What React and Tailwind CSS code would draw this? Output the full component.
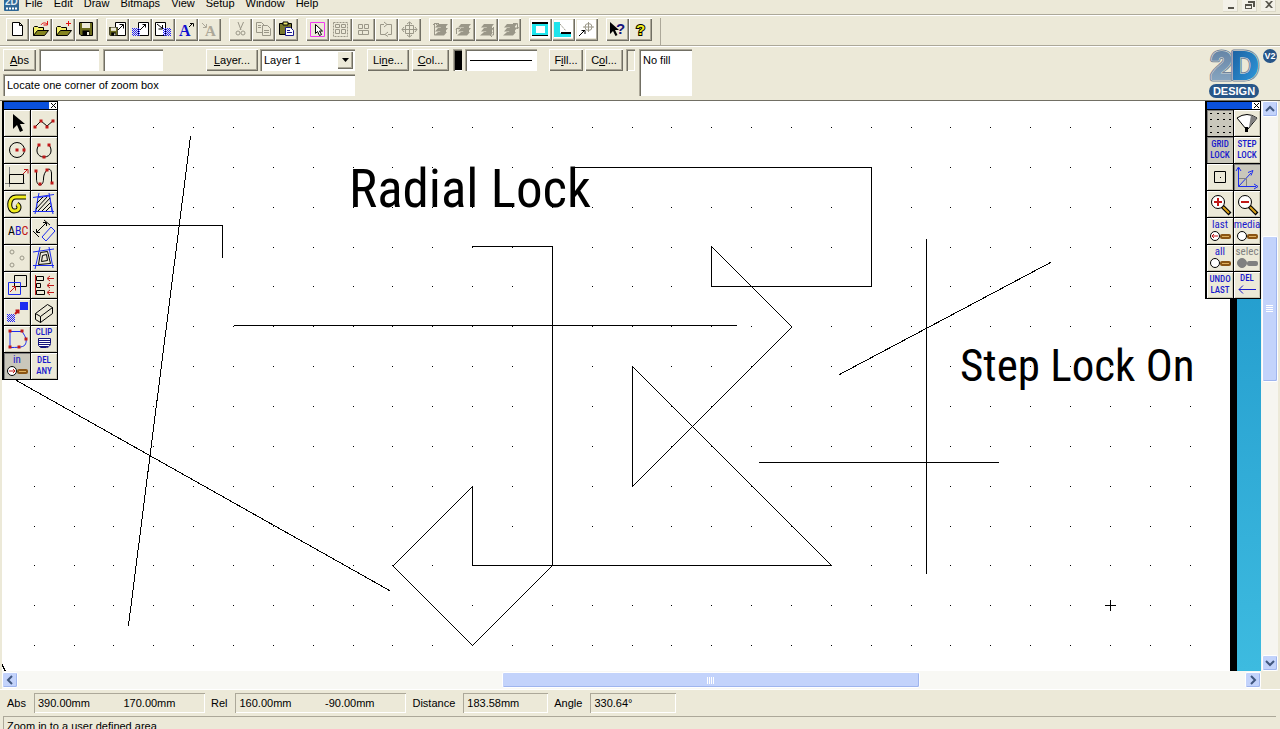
import { useState } from "react";

/* ---------- shared looks ---------- */
const raised =
  "bg-[#ece9d8] shadow-[inset_1px_1px_0_#ffffff,inset_-1px_-1px_0_#716f64,inset_-2px_-2px_0_#aca899]";
const sunken =
  "bg-white shadow-[inset_1px_1px_0_#aca899,inset_2px_2px_0_#716f64,inset_-1px_-1px_0_#ffffff]";
const statusBox =
  "flex h-5 items-center shadow-[inset_1px_1px_0_#aca899,inset_-1px_-1px_0_#ffffff]";

const NARROW = "Roboto Condensed, Liberation Sans, sans-serif";
const BLUE = "#1a1acc";
const RED = "#c01818";

/* ---------- toolbar icons, 23x23 ---------- */
const Floppy = ({ x = 0, y = 0, s = 14 }) => (
  <svg x={x} y={y} width={s} height={s} viewBox="0 0 14 14">
    <path d="M.5.5h13v13H2L.5 12z" fill="#6b6b1c" stroke="#000" />
    <path d="M3 1h8v5H3z" fill="#ece9d8" />
    <path d="M3.500 8.500h7v5h-7z" fill="#000" />
    <path d="M8 10h2v3H8z" fill="#ece9d8" />
  </svg>
);

const Folder = () => (
  <>
    <path d="M4.500 17.500v-8l1-1h3l1 1h5v3" fill="#f4f06a" stroke="#000" />
    <path d="M4.500 17.500l4-5h11l-4 5z" fill="#85851f" stroke="#000" />
  </>
);

const Hatch = ({ x, y }) => (
  <svg x={x} y={y} width="8" height="8" shapeRendering="crispEdges">
    {Array.from({ length: 32 }, (_, i) => (
      <rect key={i} x={(i % 4) * 2 + (Math.floor(i / 4) % 2)} y={Math.floor(i / 4)}
            width="1" height="1" fill="#2222ff" />
    ))}
  </svg>
);

const Layers = () => (
  <g fill="#9a9788">
    <path d="M9 6h10l-3 3.500H6z" />
    <path d="M9 10h10l-3 3.500H6z" />
    <path d="M9 14h9l-3 3.500H5z" />
    <path d="M12 8h5v7h-6z" />
  </g>
);

const ICONS = {
  New: <path d="M6.500 4.500h7l3 3v10h-10zM13.500 4.500v3h3" fill="#fff" stroke="#000" />,
  Open: (
    <>
      <Folder />
      <path d="M12 7c1-2 4-3 6-1M18.500 3v4h-4" fill="none" stroke="#e01010" />
    </>
  ),
  "Open and add": (
    <>
      <Folder />
      <path d="M16.500 3v5M14 5.500h5" stroke="#e01010" />
    </>
  ),
  Save: <Floppy x={4} y={4} />,
  "Save part": (
    <>
      <path d="M9.500 4.500h10v13h-10z" fill="#fff" stroke="#000" />
      <Floppy x={3} y={9} s={9} />
      <path d="M12 12l5-5M13.500 6.500h4v4" fill="none" stroke="#000" />
    </>
  ),
  "Export bitmap": (
    <>
      <path d="M9.500 4.500h10v13h-10z" fill="#fff" stroke="#000" />
      <Hatch x={3} y={10} />
      <path d="M11 12l6-6M13.500 6.500h3v3" fill="none" stroke="#000" />
    </>
  ),
  "Import bitmap": (
    <>
      <path d="M3.500 4.500h10v13h-10z" fill="#fff" stroke="#000" />
      <Hatch x={11} y={10} />
      <path d="M5 6l5 4M10.500 7v4h-4" fill="none" stroke="#000" />
    </>
  ),
  "Export text": (
    <>
      <text x="4" y="18" fontSize="16" fontWeight="bold" fill="#1010d0"
            fontFamily="Liberation Serif, serif">A</text>
      <path d="M14 9l4-4M15 5.500h3.500v3" fill="none" stroke="#000" />
    </>
  ),
  "Import text": (
    <>
      <text x="7" y="18" fontSize="15" fontWeight="bold" fill="#aca899"
            fontFamily="Liberation Serif, serif">A</text>
      <path d="M4 5l4 4M8.500 6v3.500H5" fill="none" stroke="#aca899" />
    </>
  ),
  Cut: (
    <g fill="none" stroke="#9a9788">
      <path d="M9 4l3 8M14.500 4L11 12" />
      <circle cx="9" cy="15" r="2" />
      <circle cx="14" cy="15" r="2" />
    </g>
  ),
  Copy: (
    <g fill="#ece9d8" stroke="#9a9788">
      <path d="M4.500 4.500h5l3 3v7h-8z" />
      <path d="M10.500 7.500h5l3 3v7h-8zM6 7.500h3M6 9.500h3M12 12.500h5M12 14.500h5" />
    </g>
  ),
  Paste: (
    <>
      <path d="M4.500 5.500h12v11h-12z" fill="#77772c" stroke="#000" />
      <path d="M8 4h5v3H8z" fill="#e9e46a" stroke="#000" />
      <path d="M10.500 9.500h5l3 3v5h-8z" fill="#fff" stroke="#1a1a8c" />
      <path d="M12 12.500h3M12 14.500h5" stroke="#1a1a8c" />
    </>
  ),
  Select: (
    <>
      <path d="M4.500 4.500h14v14h-14z" fill="none" stroke="#f03cf0" />
      <path d="M9.500 6.500v9l2-2 2 4 2-1-2-3.500h3z" fill="#fff" stroke="#000" />
    </>
  ),
  "Select all": (
    <g fill="none" stroke="#9a9788">
      <path d="M4.500 4.500h14v14h-14z" strokeDasharray="2 1" />
      <path d="M6.500 6.500h4v3h-4zM12.500 6.500h4v3h-4zM6.500 11.500h4v4h-4zM12.500 11.500h4v4h-4z" />
    </g>
  ),
  Group: (
    <path d="M6.500 6.500h4v4h-4zM12.500 6.500h4v4h-4zM6.500 12.500h10v4h-10zM10.500 12.500v4"
          fill="none" stroke="#9a9788" />
  ),
  Ungroup: (
    <path d="M9 6.500H5.500v10H10M12 6.500h4.500v10H13M9 4l3 2.500-3 2.500M13 14l-3 2.500 3 2"
          fill="none" stroke="#9a9788" />
  ),
  Move: (
    <path d="M11.500 4v15M4 11.500h15M9 6l2.500-2L14 6M9 17l2.500 2 2.500-2M6 9l-2 2.500L6 14M17 9l2 2.500-2 2.500M7.500 7.500h8v8h-8z"
          fill="none" stroke="#9a9788" />
  ),
  "Bring to front": (
    <>
      <Layers />
      <path d="M5.500 17V5.500H10M4 7l2-2 2 2" fill="none" stroke="#9a9788" />
    </>
  ),
  "Bring forward": (
    <>
      <Layers />
      <path d="M4.500 16v-5.500H8M4 12l1-2 2 1" fill="none" stroke="#9a9788" />
    </>
  ),
  "Send backward": (
    <>
      <Layers />
      <path d="M18.500 9v8H15M17 15l-2 2 2 2" fill="none" stroke="#9a9788" />
    </>
  ),
  "Send to back": (
    <>
      <Layers />
      <path d="M15 5.500h4.500V11M17.500 9l2 2 1-2" fill="none" stroke="#9a9788" />
    </>
  ),
  "Zoom page": (
    <>
      <path d="M2 2h19v18H2z" fill="#fff" />
      <path d="M3 5h16v13H3z" fill="#1fe4ec" />
      <path d="M7 8h9v7H7z" fill="#fff" />
      <path d="M3 4h16v2H3zM3 17h16v1H3z" />
    </>
  ),
  "Show axes": (
    <>
      <path d="M2 2h19v18H2z" fill="#fff" />
      <path d="M2 4h6v11h11v4H2z" fill="#1fe4ec" />
      <path d="M9 14h10v2H9z" />
      <path d="M8 6l6 7" stroke="#9a9788" strokeDasharray="2 1" />
    </>
  ),
  "Snap point": (
    <>
      <path d="M2 2h19v18H2z" fill="#fff" />
      <path d="M4 18l6-6M6.500 12.500H10V16" fill="none" stroke="#000" />
      <circle cx="13.500" cy="9" r="3.500" fill="none" stroke="#9a9788" />
      <path d="M8 9h11M13.500 4v10" stroke="#9a9788" />
    </>
  ),
  "Context help": (
    <>
      <path d="M4 4v12l3-3 2.500 5 2-1L9 12h4z" />
      <text x="10" y="16" fontSize="15" fontWeight="bold" fill="#14147c"
            fontFamily="Liberation Sans, sans-serif">?</text>
    </>
  ),
  Help: (
    <text x="7" y="17" fontSize="15" fontWeight="bold" fill="#f2ee1c" stroke="#000"
          strokeWidth="2" paintOrder="stroke" fontFamily="Liberation Sans, sans-serif">?</text>
  ),
};

const TOOLBAR = [
  ["New", "Open", "Open and add", "Save"],
  ["Save part", "Export bitmap", "Import bitmap", "Export text", "Import text"],
  ["Cut", "Copy", "Paste"],
  ["Select", "Select all", "Group", "Ungroup", "Move"],
  ["Bring to front", "Bring forward", "Send backward", "Send to back"],
  ["Zoom page", "Show axes", "Snap point"],
  ["Context help", "Help"],
];

/* ---------- palette icons, 26x26 ---------- */
const Dots = ({ at, r = 1.5 }) =>
  at.map(([x, y]) => (
    <rect key={x + "-" + y} x={x - r} y={y - r} width={r * 2} height={r * 2} fill={RED} />
  ));

const Glass = ({ cx = 8, arrow, off }) => (
  <>
    <circle cx={cx} cy="18" r="4.500" fill={off ? "#808080" : "#fff"} stroke={off ? "#808080" : "#000"} />
    <rect x={cx + 5} y="16" width="11" height="5" rx="2" fill={off ? "#808080" : "#8a5414"} />
    {!off && <path d={`M${cx + 7} 18.500h7`} stroke="#e0b060" />}
    {arrow === "in" && <path d="M5 18h6M9 16l2 2-2 2" fill="none" stroke={RED} />}
    {arrow === "out" && <path d="M5 18h6M7 16l-2 2 2 2" fill="none" stroke={RED} />}
  </>
);

const Zoomer = ({ plus }) => (
  <>
    <path d="M15 15l8 8" stroke="#000" strokeWidth="4" />
    <path d="M16 16l6 6" stroke="#d8a018" strokeWidth="2" />
    <circle cx="11" cy="11" r="6.500" fill="#fff" stroke="#000" />
    <path d={plus ? "M7 11h8M11 7v8" : "M7 11h8"} stroke={RED} strokeWidth="2" />
  </>
);

const LEFT_TOOLS = [
  { name: "Select", art: <path d="M9 4v15l4-4 3 7 3-1.500-3-6.500h5z" /> },
  { name: "Line", art: <><path d="M4 17l6-6 6 5 7-6" fill="none" stroke="#000" /><Dots at={[[4, 17], [10, 11], [16, 17], [22, 11]]} /></> },
  { name: "Circle", art: <><circle cx="13" cy="13" r="7.500" fill="none" stroke="#000" /><Dots at={[[13, 13], [20, 13]]} /></> },
  { name: "Arc", art: <><path d="M8 8c-4 5-2 12 5 12s9-7 5-12" fill="none" stroke="#000" /><Dots at={[[8, 8], [18, 8], [13, 20]]} /></> },
  { name: "Rectangle", art: <><path d="M1 19.500h20M5.500 3v20" stroke="#808080" /><path d="M5.500 10.500h14v9h-14z" fill="none" stroke="#000" /><path d="M19 10l4-4M20 5.500h4v4" fill="none" stroke={RED} /></> },
  { name: "Curve", art: <><path d="M5.500 7v8c0 8 7 8 7 0S19.500 1 20.500 9v10" fill="none" stroke="#000" /><Dots at={[[5, 7], [9, 20], [16, 6], [21, 19]]} /></> },
  { name: "Path", art: <><path d="M22 6H12c-8 0-8 14-2 14s6-5 3-7" fill="none" stroke="#000" strokeWidth="5" /><path d="M22 6H12c-8 0-8 14-2 14s6-5 3-7" fill="none" stroke="#f0ec20" strokeWidth="3" /></> },
  { name: "Hatch", art: <><path d="M2 6.500l21-3M2 20.500h21M8 2L4 23M18 2l4 21" stroke="#1c2cf0" /><path d="M7 6.500L18.500 5 21 20.500H5z" fill="#ece9d8" stroke="#1c2cf0" /><path d="M6 12l6-6M5 18L16 6M7 20L19 7M11 20l8-8M15 20l5-5" stroke="#000" /></> },
  { name: "Text", art: <text x="4" y="17" fontSize="12" fontFamily={NARROW}><tspan>A</tspan><tspan fill={BLUE}>B</tspan><tspan fill={RED}>C</tspan></text> },
  { name: "Dimension", art: <><path d="M11 19l9-10 4 4-9 10z" fill="none" stroke="#1c2cf0" /><path d="M6 14l9-9M5.500 11v3.500H9M12 4.500h3.500V8M2 13l6 6M13 2l6 5" fill="none" stroke="#000" /></> },
  { name: "Points", art: <g fill="none" stroke="#9a9788"><circle cx="8" cy="7" r="2" /><circle cx="18" cy="13" r="2" /><circle cx="8" cy="20" r="2" /></g> },
  { name: "Contour", art: <><path d="M2 7l21-3M2 20.500h21M9 2L4 24M18 2l4 21" stroke="#1c2cf0" /><path d="M9.500 7.500l7-1 3 12-12 1z" fill="#ece9d8" stroke="#000" /><path d="M11.500 10.500l4-1 1 6-6 1z" fill="none" stroke="#000" /></> },
  { name: "Transform", art: <><path d="M10.500 3.500h12v11h-12z" fill="none" stroke="#000" /><path d="M4.500 10.500h12v12h-12z" fill="none" stroke="#1c2cf0" /><path d="M6 20l5-5M8 14.500h3.500v4" fill="none" stroke={RED} /></> },
  { name: "Align", art: <><path d="M4.500 3v20" stroke={RED} /><path d="M5.500 4.500h7v4h-7zM5.500 11.500h4v4h-4zM5.500 18.500h8v4h-8z" fill="none" stroke="#000" /><path d="M17 6.500h6M17 13.500h6M17 20.500h6M19 4l-3 2.500L19 9M19 11l-3 2.500 3 2.500M19 18l-3 2.500 3 2.500" fill="none" stroke={RED} /></> },
  { name: "Scale", art: <><rect x="16" y="3" width="8" height="8" fill="#1c2cf0" /><Hatch x={3} y={15} /><path d="M11 15l4-4M11.500 11.500h3v3" fill="none" stroke={RED} strokeWidth="2" /></> },
  { name: "Extrude", art: <path d="M4.500 14.500l12-9 5 3v6l-12 9-5-3zM4.500 14.500l5 3 12-9M9.500 17.500v6" fill="none" stroke="#000" /> },
  { name: "Edit nodes", art: <><path d="M6 5.500h12c2 3 5 7 4 11-1 4-3 5-16 5z" fill="none" stroke="#1c2cf0" /><Dots at={[[6, 5], [18, 5], [22, 13], [15, 21], [6, 21]]} /></> },
  { name: "Clip", label: ["CLIP"], art: <><path d="M7.500 12.500h12v5c0 2-2 4-4 4h-6l-2-2z" fill="#fff" stroke="#14147c" /><path d="M8 14.500h11M8 16.500h11M8 18.500h11M9 20.500h8" stroke="#14147c" /></> },
  { name: "Zoom in box", label: ["in"], art: <Glass arrow="in" />, on: true },
  { name: "Delete any", label: ["DEL", "ANY"] },
];

const RIGHT_TOOLS = [
  {
    name: "Show grid", on: true,
    art: [3, 10, 16, 22].map((x) => [3, 9, 16, 22].map((y) => (
      <rect key={x + "-" + y} x={x} y={y} width="2" height="1" />
    ))),
  },
  { name: "Angle lock", art: <><path d="M3 8q10-7 20 0l-9 11h-2z" fill="#fff" stroke="#000" /><path d="M17 5l6 3-8 9z" fill="#808080" /><path d="M11 17h3v5h-3z" /></> },
  { name: "Grid lock", label: ["GRID", "LOCK"], on: true },
  { name: "Step lock", label: ["STEP", "LOCK"] },
  { name: "Attach", art: <><path d="M7.500 7.500h11v11h-11z" fill="none" stroke="#000" /><rect x="13" y="13" width="1" height="1" /></> },
  { name: "Radial lock", on: true, art: <><path d="M4.500 22.500V4M4.500 22.500H22M4.500 22.500L17 9M2 7l2.500-4L7 7M20 20l4 2.500-4 2.500M14 8.500l5-2-2 5" fill="none" stroke="#1c2cf0" /><path d="M5 14.500h7.500V22" fill="none" stroke="#808080" /></> },
  { name: "Zoom in", art: <Zoomer plus /> },
  { name: "Zoom out", art: <Zoomer /> },
  { name: "Zoom last", label: ["last"], art: <Glass arrow="out" /> },
  { name: "Zoom media", label: ["media"], art: <Glass /> },
  { name: "Zoom all", label: ["all"], art: <Glass /> },
  { name: "Zoom selected", label: ["selec"], art: <Glass off />, off: true },
  { name: "Undo last", label: ["UNDO", "LAST"] },
  { name: "Delete last", label: ["DEL"], art: <path d="M5 17.500h17M9 13.500l-4 4 4 4" fill="none" stroke={BLUE} /> },
];

function Palette({ tools, label }) {
  return (
    <section aria-label={label} className="w-14 bg-black pt-px pr-px pb-px pl-0.5">
      <div className="mb-px flex h-[7px] bg-[#0a50dc]">
        <button aria-label="Close palette" className="ml-auto flex w-2 items-center justify-center bg-white">
          <svg width="7" height="7" viewBox="0 0 7 7"><path d="M1 1l5 5M6 1L1 6" stroke="#000" /></svg>
        </button>
      </div>
      <div className="grid grid-cols-2 gap-px">
        {tools.map((t) => (
          <button key={t.name} aria-label={t.name} aria-pressed={!!t.on}
                  className={`relative h-[26px] ${
                    t.on
                      ? "bg-[#c9c7bb] shadow-[inset_1px_1px_0_#808080]"
                      : "bg-[#ece9d8] shadow-[inset_1px_1px_0_#ffffff,inset_-1px_-1px_0_#c8c5b2]"
                  }`}>
            {t.art && <svg width="26" height="26" viewBox="0 0 26 26" className="absolute inset-0">{t.art}</svg>}
            {t.label && (
              <span className={`relative flex h-full flex-col items-center font-['Roboto_Condensed','Liberation_Sans',sans-serif] ${
                t.label.length > 1 ? "justify-center" : "justify-start pt-px"
              } ${t.off ? "text-[#808080]" : "text-[#1a1acc]"}`}>
                {t.label.map((l) => (
                  <span key={l} className={l === l.toUpperCase() ? "text-[9px] leading-[11px] font-medium" : "text-[11px] leading-[11px]"}>
                    {l}
                  </span>
                ))}
              </span>
            )}
          </button>
        ))}
      </div>
    </section>
  );
}

/* ---------- the drawing ---------- */
const GRID = [];
for (let r = 0; r < 14; r++)
  for (let c = 0; c < 31; c++)
    GRID.push([Math.round(33.7 + c * 39.86), Math.round(127 + r * 39.85)]);

function Drawing() {
  return (
    <svg className="absolute inset-0 h-full w-full" role="img" aria-label="Drawing">
      <g transform="translate(-2 -101)">
        <g shapeRendering="crispEdges">
          {GRID.map(([x, y]) => <rect key={x + "-" + y} x={x} y={y} width="1" height="1" />)}
          <g transform="translate(.5 .5)" fill="none" stroke="#000" strokeLinecap="square">
            <path d="M190 136L128 625" />
            <path d="M58 225H222V257" />
            <path d="M16 380L389 590" />
            <path d="M1 663L5 671" />
            <path d="M234 325H736" />
            <path d="M472 246H552V565L472 645L392 565" />
            <path d="M393 565L472 486V565H831L632 366V486L791 327" />
            <path d="M791 326L711 246V286H871V167H573" />
            <path d="M926 239V573M759 462H998M839 374L1050 262" />
            <path d="M1105 605H1115M1110 600V610" />
          </g>
        </g>
        <g fontFamily={NARROW}>
          <text x="349" y="207" fontSize="53">Radial Lock</text>
          <text x="960" y="381" fontSize="45">Step Lock On</text>
        </g>
      </g>
    </svg>
  );
}

/* ---------- scroll bars ---------- */
const scrollPart = "rounded-xs border border-white bg-[#c3d3fb] shadow-[inset_-1px_-1px_0_#9fb5ee]";

const ScrollButton = ({ label, d }) => (
  <button aria-label={label} className={`flex size-4 shrink-0 items-center justify-center ${scrollPart}`}>
    <svg width="10" height="10" viewBox="0 0 10 10"><path d={d} fill="none" stroke="#40577f" strokeWidth="2" /></svg>
  </button>
);

/* ---------- small bits ---------- */
const TextButton = ({ pre = "", hot, post, className }) => (
  <button className={`h-[22px] shrink-0 ${raised} ${className}`}>{pre}<u>{hot}</u>{post}</button>
);

/* outline, pale rim, then the filled figure on top */
const Figure = ({ x, fill, children }) => (
  <>
    <text x={x} y="30" fill="#71839a" stroke="#71839a" strokeWidth="5">{children}</text>
    <text x={x} y="30" fill="#e8e6dc" stroke="#e8e6dc" strokeWidth="3">{children}</text>
    <text x={x} y="30" fill={fill} stroke={fill} strokeWidth="2">{children}</text>
  </>
);

const Logo = () => (
  <svg width="72" height="50" viewBox="0 0 72 50" className="shrink-0" role="img" aria-label="2D Design V2">
    <defs>
      <linearGradient id="d" x1="0" y1="0" x2="1" y2="1">
        <stop offset="0" stopColor="#1b5c9c" /><stop offset="1" stopColor="#2f9ce0" />
      </linearGradient>
      <linearGradient id="two" x1="0" y1="0" x2="0" y2="1">
        <stop offset="0" stopColor="#5f7fa2" /><stop offset="1" stopColor="#8eabc4" />
      </linearGradient>
    </defs>
    <g fontFamily="Liberation Sans, sans-serif" fontWeight="bold">
      <g fontSize="38" strokeLinejoin="round">
        <Figure x="3" fill="url(#two)">2</Figure>
        <Figure x="23" fill="url(#d)">D</Figure>
      </g>
      <rect x="1" y="35" width="50" height="14" rx="7" fill="#285688" />
      <text x="26" y="46" fontSize="11" fill="#fff" textAnchor="middle">DESIGN</text>
      <circle cx="62" cy="7" r="7" fill="#285688" />
      <text x="62" y="10" fontSize="9" fill="#fff" textAnchor="middle">V2</text>
    </g>
  </svg>
);

const Readout = ({ label, values, className }) => (
  <dl className="flex items-center">
    <dt>{label}</dt>
    <dd className={`${statusBox} ${className}`}>
      {values.map((v) => <span key={v} className="flex-1 pl-1">{v}</span>)}
    </dd>
  </dl>
);

const MENUS = ["File", "Edit", "Draw", "Bitmaps", "View", "Setup", "Window", "Help"];
const WINDOW_BUTTONS = [
  { name: "Minimise", d: "M3 7h6v2H3z" },
  { name: "Restore", d: "M4 1h7v6H9V3H4zM1 4h7v5H1zM2 6v2h5V6z" },
  { name: "Close", d: "M2 1h2l2 2 2-2h2L7 4.500 10 8H8L6 6 4 8H2l3-3.500z" },
];

export default function App() {
  const [pos, setPos] = useState({ x: "", y: "" });
  const [layer, setLayer] = useState("Layer 1");
  const change = (e) => setPos({ ...pos, [e.target.name]: e.target.value });

  return (
    <div className="flex h-screen flex-col overflow-hidden bg-[#ece9d8] font-['Liberation_Sans',Arial,sans-serif] text-[11px] leading-[14px] text-black">
      {/* menu bar, its upper part hidden under the window edge */}
      <header className="flex h-3.5 shrink-0 items-end overflow-hidden">
        <svg width="16" height="22" viewBox="0 0 16 22" className="ml-1 shrink-0">
          <rect x="0" y="4" width="15" height="15" rx="1" fill="#2f6796" />
          <text x="1" y="13" fontSize="10" fontWeight="bold" fill="#dfe9f2"
                fontFamily="Liberation Sans, sans-serif">2D</text>
          <path d="M2 16.500h11" stroke="#fff" strokeWidth="2" strokeDasharray="2 1" />
        </svg>
        <nav className="flex h-[22px] items-center gap-[11px] pl-[5px]">
          {MENUS.map((m) => <button key={m}>{m}</button>)}
        </nav>
        <div className="mr-1 mb-0.5 ml-auto flex gap-1">
          {WINDOW_BUTTONS.map((b) => (
            <button key={b.name} aria-label={b.name}
                    className="flex h-4 w-[15px] items-end justify-center bg-[#f3f1e8] pb-0.5 shadow-[inset_-1px_-1px_0_#dcd9c8]">
              <svg width="12" height="10" viewBox="0 0 12 10" fillRule="evenodd" fill="#55534a"><path d={b.d} /></svg>
            </button>
          ))}
        </div>
      </header>

      {/* toolbar */}
      <div className="flex h-[31px] shrink-0 gap-2 border-t border-[#aca899] pt-[3px] pl-1.5 shadow-[inset_0_1px_0_#ffffff]">
        {TOOLBAR.map((group) => (
          <div key={group[0]} className="flex">
            {group.map((name) => (
              <button key={name} aria-label={name} className={`size-[23px] ${raised}`}>
                <svg width="23" height="23" viewBox="0 0 23 23">{ICONS[name]}</svg>
              </button>
            ))}
          </div>
        ))}
        <div className="w-px bg-[#aca899]" />
      </div>

      {/* attributes */}
      <div className="flex h-14 shrink-0 items-start border-t border-b border-t-[#aca899] border-b-[#716f64] pt-[3px] pl-[3px] shadow-[inset_0_1px_0_#ffffff]">
        <div className="w-[352px] shrink-0">
          <div className="flex">
            <TextButton hot="A" post="bs" className="w-[33px]" />
            <input name="x" aria-label="X position" value={pos.x} onChange={change}
                   className={`ml-[3px] h-[22px] w-[60px] px-1 ${sunken}`} />
            <input name="y" aria-label="Y position" value={pos.y} onChange={change}
                   className={`ml-1 h-[22px] w-[60px] px-1 ${sunken}`} />
            <TextButton hot="L" post="ayer..." className="ml-[43px] w-[52px]" />
            <div className="relative ml-0.5 flex-1">
              <select aria-label="Layer" value={layer} onChange={(e) => setLayer(e.target.value)}
                      className={`h-[22px] w-full appearance-none pl-1 ${sunken}`}>
                <option>Layer 1</option>
              </select>
              <span className={`pointer-events-none absolute top-0.5 right-0.5 flex h-[18px] w-4 items-center justify-center ${raised}`}>
                <svg width="7" height="4"><path d="M0 0h7L3.500 4z" /></svg>
              </span>
            </div>
          </div>
          <output className={`mt-[3px] flex h-[22px] items-center pl-1 ${sunken}`}>
            Locate one corner of zoom box
          </output>
        </div>

        <TextButton pre="Li" hot="n" post="e..." className="ml-3 w-[42px]" />
        <TextButton hot="C" post="ol..." className="ml-[3px] w-[37px]" />
        <div className={`ml-1 h-[22px] w-[9px] p-0.5 pr-0 ${sunken}`}>
          <div className="h-[19px] w-[7px] bg-black" />
        </div>
        <div className={`ml-[3px] flex h-[22px] w-[72px] items-center px-[5px] ${sunken}`}>
          <hr className="w-full border-black" />
        </div>
        <TextButton pre="F" hot="i" post="ll..." className="ml-3 w-[34px]" />
        <TextButton pre="C" hot="o" post="l..." className="ml-0.5 w-[38px]" />
        <div className="ml-[3px] h-[22px] w-[9px] shadow-[inset_1px_1px_0_#aca899,inset_2px_2px_0_#716f64,inset_-1px_-1px_0_#ffffff]" />
        <div className={`ml-1 h-[47px] w-[53px] pt-1 pl-1 ${sunken}`}>No fill</div>
        <div className="ml-auto"><Logo /></div>
      </div>

      {/* sheet */}
      <div className="flex min-h-0 flex-1">
        <main className="relative ml-0.5 flex flex-1 bg-white">
          <div className="ml-auto w-[7px] bg-black" />
          <div className="w-6 bg-linear-to-b from-[#1790c6] to-[#3dbbe0]" />
          <Drawing />
          <div className="absolute top-0 left-0"><Palette tools={LEFT_TOOLS} label="Drawing tools" /></div>
          <div className="absolute top-0 right-0"><Palette tools={RIGHT_TOOLS} label="Locks and zoom" /></div>
        </main>
        <div className="mr-0.5 flex w-[17px] flex-col items-center bg-[#f6f5f0]">
          <ScrollButton label="Scroll up" d="M1 7l4-4 4 4" />
          <div className="flex-[119]" />
          <div className={`flex w-4 flex-[145] items-center justify-center ${scrollPart}`}>
            <svg width="7" height="8"><path d="M0 .5h7M0 2.500h7M0 4.500h7M0 6.500h7" stroke="#fff" /></svg>
          </div>
          <div className="flex-[274]" />
          <ScrollButton label="Scroll down" d="M1 3l4 4 4-4" />
        </div>
      </div>
      <div className="mr-[19px] ml-0.5 flex h-[18px] shrink-0 items-center bg-[#f8f8f4]">
        <ScrollButton label="Scroll left" d="M7 1L3 5l4 4" />
        <div className="flex-[484]" />
        <div className={`flex h-4 flex-[417] items-center justify-center ${scrollPart}`}>
          <svg width="8" height="7"><path d="M.5 0v7M2.500 0v7M4.500 0v7M6.500 0v7" stroke="#fff" /></svg>
        </div>
        <div className="flex-[325]" />
        <ScrollButton label="Scroll right" d="M3 1l4 4-4 4" />
      </div>

      {/* coordinates */}
      <footer className="shrink-0">
        <div className="flex h-[27px] items-center gap-1.5 border-t border-white pl-[7px]">
          <Readout label="Abs" values={["390.00mm", "170.00mm"]} className="ml-2 w-[171px]" />
          <Readout label="Rel" values={["160.00mm", "-90.00mm"]} className="ml-2 w-[171px]" />
          <Readout label="Distance" values={["183.58mm"]} className="ml-2 w-[85px]" />
          <Readout label="Angle" values={["330.64°"]} className="ml-2 w-[86px]" />
        </div>
        <div className="mr-1 ml-[3px] h-[13px] overflow-hidden border-t border-l border-[#aca899] pt-0.5 pl-[3px]">
          Zoom in to a user defined area
        </div>
      </footer>
    </div>
  );
}
